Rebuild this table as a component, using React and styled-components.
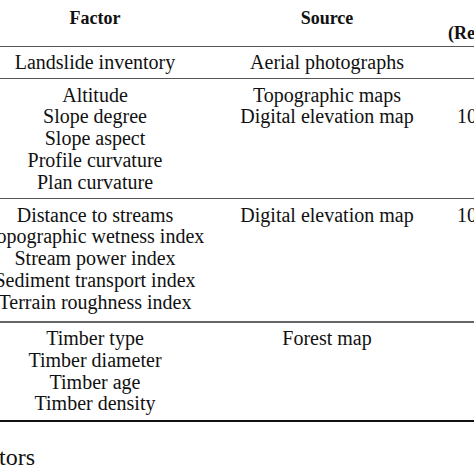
import React from "react";
import styled, { createGlobalStyle } from "styled-components";

const GlobalStyle = createGlobalStyle`
  html, body {
    margin: 0;
    padding: 0;
    background: #fff;
  }
`;

// the visible crop of the page
const Page = styled.div`
  width: 474px;
  height: 474px;
  overflow: hidden;
  background: #fff;
  color: #111;
  font-family: "Liberation Serif", "Times New Roman", serif;
`;

const Table = styled.table`
  margin-left: -40px;
  border-collapse: collapse;
  table-layout: fixed;
  width: 624px;
`;

const Row = styled.tr`
  border-bottom: ${(p) => p.$rule || "1px solid #555"};
`;

const HeadCell = styled.th`
  height: ${(p) => p.$height || 46}px;
  box-sizing: border-box;
  padding: ${(p) => p.$top || 8}px 0 0 ${(p) => p.$indent || 0}px;
  vertical-align: top;
  text-align: ${(p) => (p.$indent ? "left" : "center")};
  font-size: 18px;
  font-weight: 700;
  line-height: 21.8px;
  white-space: nowrap;
`;

const Cell = styled.td`
  height: ${(p) => p.$height}px;
  box-sizing: border-box;
  padding: ${(p) => p.$top}px 0 0 ${(p) => p.$indent || 0}px;
  vertical-align: top;
  text-align: ${(p) => (p.$indent ? "left" : "center")};
  font-size: 20px;
  line-height: 21.8px;
  white-space: nowrap;
`;

const Line = styled.div`
  min-height: 21.8px;
`;

const CaptionRow = styled.div`
  display: flex;
  justify-content: flex-end;
  width: 35px;
  margin-top: 22px;
  white-space: nowrap;
  font-size: 24px;
  line-height: 26px;
`;

const rows = [
  {
    height: 32,
    top: 5,
    factors: ["Landslide inventory"],
    source: ["Aerial photographs"],
    scale: [],
  },
  {
    height: 120,
    top: 6,
    factors: [
      "Altitude",
      "Slope degree",
      "Slope aspect",
      "Profile curvature",
      "Plan curvature",
    ],
    source: ["Topographic maps", "Digital elevation map"],
    scale: ["", "10 m × 10 m"],
  },
  {
    height: 124,
    top: 6,
    rule: "2px solid #666",
    factors: [
      "Distance to streams",
      "Topographic wetness index",
      "Stream power index",
      "Sediment transport index",
      "Terrain roughness index",
    ],
    source: ["Digital elevation map"],
    scale: ["10 m × 10 m"],
  },
  {
    height: 99,
    top: 5,
    rule: "2px solid #111",
    factors: ["Timber type", "Timber diameter", "Timber age", "Timber density"],
    source: ["Forest map"],
    scale: [],
  },
];

const Lines = ({ items }) =>
  items.map((text, i) => <Line key={i}>{text}</Line>);

export default function App() {
  return (
    <Page>
      <GlobalStyle />
      <Table>
        <colgroup>
          <col style={{ width: 270 }} />
          <col style={{ width: 194 }} />
          <col style={{ width: 160 }} />
        </colgroup>
        <thead>
          <Row>
            <HeadCell>Factor</HeadCell>
            <HeadCell>Source</HeadCell>
            <HeadCell $top={23} $indent={24}>
              (Resolution)
            </HeadCell>
          </Row>
        </thead>
        <tbody>
          {rows.map((r, i) => (
            <Row key={i} $rule={r.rule}>
              <Cell $height={r.height} $top={r.top}>
                <Lines items={r.factors} />
              </Cell>
              <Cell $height={r.height} $top={r.top}>
                <Lines items={r.source} />
              </Cell>
              <Cell $height={r.height} $top={r.top} $indent={33}>
                <Lines items={r.scale} />
              </Cell>
            </Row>
          ))}
        </tbody>
      </Table>
      <CaptionRow>Table 1. Landslide conditioning factors</CaptionRow>
    </Page>
  );
}
